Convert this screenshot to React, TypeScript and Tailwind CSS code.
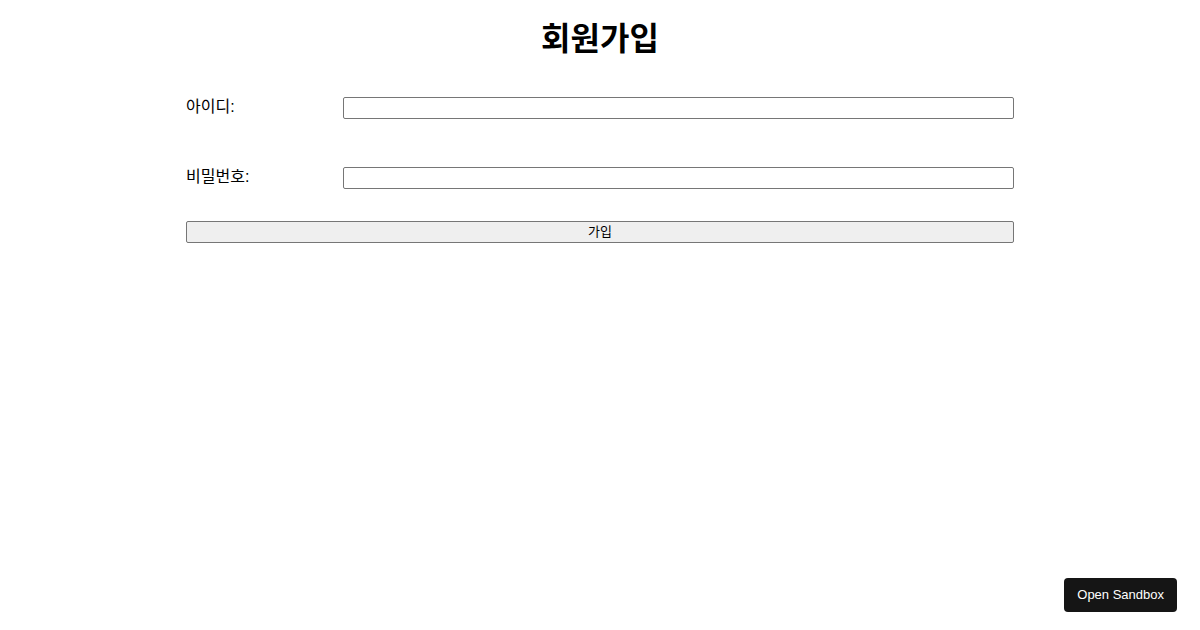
export default function App() {
  return (
    <div className="relative min-h-[630px] bg-white text-black font-['Liberation_Sans','Noto_Sans_CJK_KR',sans-serif]">
      <h1 className="pt-[21px] text-center text-[32px] font-bold leading-[37px]">회원가입</h1>

      <form className="mx-auto mt-[39px] w-[828px]" onSubmit={(e) => e.preventDefault()}>
        <div className="flex items-start">
          <label htmlFor="userId" className="w-[157px] pt-[1px] text-[16px] leading-[18px]">
            아이디:
          </label>
          <input
            id="userId"
            type="text"
            className="h-[22px] flex-1 rounded-[2px] border border-[#767676] px-[2px] text-[13px]"
          />
        </div>

        <div className="mt-[48px] flex items-start">
          <label htmlFor="password" className="w-[157px] pt-[1px] text-[16px] leading-[18px]">
            비밀번호:
          </label>
          <input
            id="password"
            type="password"
            className="h-[22px] flex-1 rounded-[2px] border border-[#767676] px-[2px] text-[13px]"
          />
        </div>

        <button
          type="submit"
          className="mt-[32px] block h-[22px] w-full rounded-[2px] border border-[#767676] bg-[#efefef] text-[13px] leading-[20px]"
        >
          가입
        </button>
      </form>

      {/* sandbox overlay button */}
      <div className="absolute right-[23px] top-[578px] rounded-[4px] bg-[#151515] px-[13px] py-[8px] text-[13px] leading-[18px] text-white font-['Liberation_Sans',sans-serif]">
        Open Sandbox
      </div>
    </div>
  );
}
